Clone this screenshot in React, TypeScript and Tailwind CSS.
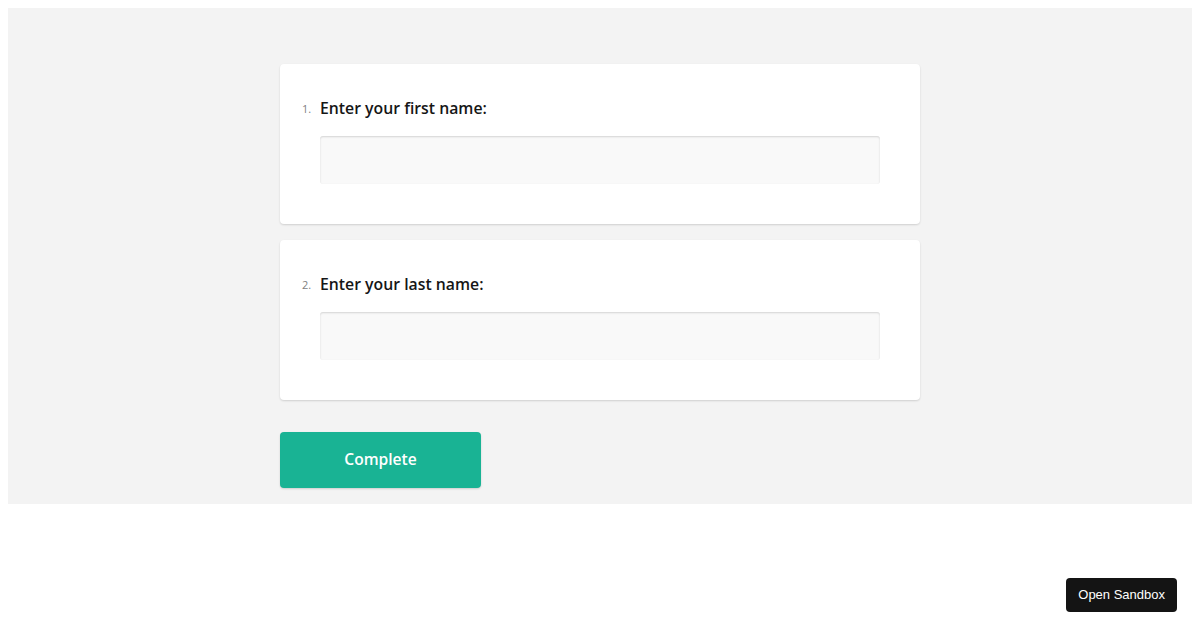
export default function App() {
  const questions = [
    { n: 1, label: "Enter your first name:" },
    { n: 2, label: "Enter your last name:" },
  ]

  return (
    <div className="relative h-[630px] w-[1200px] bg-white p-2" style={{ fontFamily: '"Open Sans", sans-serif' }}>
      <div className="flex flex-col items-center bg-[#f3f3f3] pt-14 pb-4">
        <div className="flex w-[640px] flex-col gap-4">
          {questions.map((q) => (
            <div key={q.n} className="rounded bg-white pt-8 pb-10 pl-10 pr-10 shadow-[0_1px_2px_rgba(0,0,0,0.15)]">
              <div className="relative flex h-6 items-center pt-px">
                <span className="absolute -left-[18px] top-[6px] text-[11px] leading-[14px] text-[#7f7f7f]">{q.n}.</span>
                <span className="text-[15.8px] font-semibold text-[#161616]">{q.label}</span>
              </div>
              <input
                type="text"
                className="mt-4 block h-12 w-full rounded-[3px] bg-[#f9f9f9] px-4 shadow-[inset_0_1px_2px_rgba(0,0,0,0.15)] outline-none"
              />
            </div>
          ))}
          <button className="mt-4 h-14 w-[201px] rounded bg-[#19b394] text-[15.6px] font-semibold text-white shadow-[0_1px_2px_rgba(0,0,0,0.15)]">
            Complete
          </button>
        </div>
      </div>
      <button
        className="absolute right-[23px] bottom-[18px] h-[34px] rounded bg-[#141414] px-3 text-[13px] text-white"
        style={{ fontFamily: '"Liberation Sans", Arial, sans-serif' }}
      >
        Open Sandbox
      </button>
    </div>
  )
}
